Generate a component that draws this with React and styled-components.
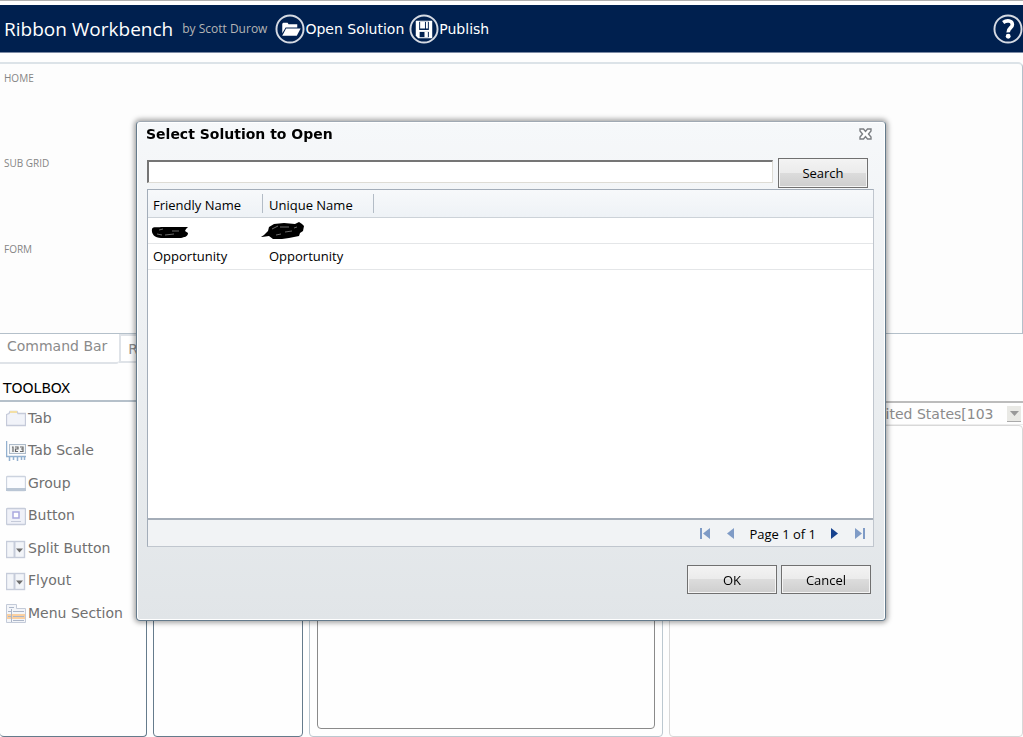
import React from "react";
import styled, { createGlobalStyle } from "styled-components";

const GlobalStyle = createGlobalStyle`
  * {
    box-sizing: border-box;
  }

  body {
    margin: 0;
    background: #fefefe;
    color: #000;
    font-family: "DejaVu Sans", Verdana, sans-serif;
    font-size: 14px;
  }

  button,
  input,
  select {
    font: inherit;
    color: inherit;
  }
`;

const segoe = `"Open Sans", "Segoe UI", sans-serif`;

const Page = styled.div`
  display: flex;
  flex-direction: column;
  min-height: 100vh;
  padding-top: 4px;
  border-top: 1px solid #b0b0b0;
`;

const Header = styled.header`
  display: flex;
  align-items: center;
  height: 48px;
  padding-left: 4px;
  background: #00204f;
  border-bottom: 1px solid #7d8ba5;
  color: #fff;

  h1 {
    margin: 0 9px 0 0;
    font: 400 19px ${segoe};
  }
`;

const Author = styled.span`
  margin-right: 8px;
  font: 12px ${segoe};
  color: #b5b5b5;
`;

const HeaderButton = styled.button`
  display: flex;
  align-items: center;
  padding: 0;
  margin-right: 5px;
  border: 0;
  background: none;
  cursor: pointer;

  &:last-child {
    margin: 0 0 0 auto;
  }
`;

const Preview = styled.section`
  display: grid;
  grid-template-rows: 85px 86px 1fr;
  height: 272px;
  margin-top: 9px;
  padding: 8px 4px;
  border: 1px solid #b4c0ca;
  border-top: 2px solid #dce3e8;
  border-left: 0;
  border-radius: 0 5px 0 0;
  background: #fdfdfd;
`;

const PreviewLabel = styled.h2`
  margin: 0;
  font: 400 10px/12px ${segoe};
  color: #858585;
`;

const Tabs = styled.div`
  display: flex;
  align-items: flex-start;
  height: 40px;
`;

const Tab = styled.button`
  height: ${p => (p.$active ? 30 : 29)}px;
  padding: ${p => (p.$active ? "0 12px 4px 7px" : "0 7px")};
  border: 2px solid #dfe3e8;
  border-width: ${p => (p.$active ? "0 0 2px" : "2px")};
  border-radius: 0 0 3px 0;
  background: #fff;
  color: #8b8b8b;
  cursor: pointer;
`;

const Workspace = styled.main`
  display: grid;
  grid-template-columns: 147px 150px 1fr 1fr;
  gap: 6px;
  flex: 1;
`;

const Column = styled.section`
  display: flex;
  flex-direction: column;
`;

const ColumnTitle = styled.h2`
  flex: none;
  height: 28px;
  margin: 0;
  padding: 5px 3px 0;
  border-bottom: 2px solid #b5c0ca;
  font-size: 14px;
  font-weight: 400;
  line-height: 18px;
`;

const Panel = styled.div`
  display: flex;
  flex: 1;
  margin-top: ${p => p.$top || 0}px;
  padding: ${p => (p.$padded ? 7 : 0)}px;
  border: 1px solid ${p => p.$color || "#657b8c"};
  border-width: ${p => p.$width || "1px"};
  border-radius: 4px;
`;

const Tools = styled.ul`
  width: 100%;
  margin: 0;
  padding: 0 0 0 6px;
  list-style: none;
`;

const Tool = styled.li`
  display: flex;
  align-items: center;
  gap: 2px;
  height: 32px;
  padding-bottom: 1px;
  margin-bottom: ${p => (p.$loose ? 1 : 0)}px;
  color: #707070;
  white-space: nowrap;

  svg {
    margin-top: 3px;
  }
`;

const LanguageBar = styled.div`
  display: flex;
  justify-content: flex-end;
  align-items: center;
  height: 24px;
  margin-top: 27px;
  border-top: 2px solid #bcbcbc;
  border-bottom: 1px solid #ececec;
  color: #8b8b8b;

  select {
    padding: 0 13px 0 4px;
    border: 0;
    background: none;
    appearance: none;
  }
`;

const DropArrow = styled.span`
  display: flex;
  align-items: center;
  justify-content: center;
  width: 14px;
  height: 16px;
  margin-right: 2px;
  border-bottom: 1px solid #aaa;
  background: #e9e9e5;
`;

const Overlay = styled.div`
  position: fixed;
  inset: 0;
  display: flex;
  align-items: center;
  justify-content: center;
  padding: 5px 1px 0 0;
`;

const Dialog = styled.div`
  display: flex;
  flex-direction: column;
  width: 750px;
  height: 500px;
  padding: 0 11px 26px 9px;
  border: 1px solid #657b8c;
  border-top-color: #a0a9b3;
  border-radius: 4px;
  background: linear-gradient(#f6f8fa, #e1e5e8);
  box-shadow: inset 0 0 0 1px #fff, 0 0 5px 2px rgba(0, 0, 0, 0.35);
  font: 13px ${segoe};
`;

const DialogTitle = styled.div`
  display: flex;
  align-items: center;
  justify-content: space-between;
  height: 24px;
  margin-bottom: 12px;

  h2 {
    margin: 0;
    font: 700 14px "DejaVu Sans", Verdana, sans-serif;
  }

  button {
    display: flex;
    padding: 0;
    margin-right: 2px;
    border: 0;
    background: none;
  }
`;

const SearchForm = styled.form`
  display: flex;
  align-items: flex-start;
  gap: 5px;
  padding: 0 6px 0 1px;

  input {
    flex: 1;
    min-width: 0;
    height: 23px;
    margin-top: 2px;
    border: 1px solid #dedcd5;
    border-top: 2px solid #757575;
    border-left: 2px solid #757575;
    background: #fff;
    outline: 0;
  }
`;

const PushButton = styled.button`
  width: 90px;
  height: ${p => p.$height || 29}px;
  padding: 0;
  border: 1px solid #707070;
  background: linear-gradient(#f3f3f3, #ebebeb 50%, #dcdcdc 50%, #cecece);
  box-shadow: inset 0 0 0 1px #f4f4f4;
`;

const Grid = styled.div`
  display: flex;
  flex-direction: column;
  flex: 1;
  margin: 1px 0 18px 1px;
  border: 1px solid #c0c6ce;
  border-top-color: #a3adb9;
  border-left-color: #a3adb9;
  background: #fff;
`;

const SolutionTable = styled.table`
  width: 100%;
  border-collapse: collapse;
  table-layout: fixed;

  th,
  td {
    height: 26px;
    padding: 0 0 0 5px;
    border-bottom: 1px solid #e4e6e8;
    text-align: left;
    font-weight: 400;
  }

  th + th,
  td + td {
    padding-left: 6px;
  }

  thead tr {
    background: linear-gradient(#f7f9fb, #eef2f6);
  }

  th {
    height: 27px;
    border-color: #ccd2d8;
  }

  th span {
    display: block;
    height: 19px;
    line-height: 22px;
    border-right: 1px solid #b3bcc6;
  }

  th:last-child span {
    border: 0;
  }

  svg {
    display: block;
    margin: 3px 0 0 -6px;
  }

  td + td svg {
    margin-left: -8px;
  }
`;

const Pager = styled.div`
  display: flex;
  align-items: center;
  justify-content: flex-end;
  gap: 13px;
  height: 28px;
  margin-top: auto;
  padding: 2px 7px 0 0;
  border-top: 2px solid #a4adb8;
  background: #f1f3f5;

  button {
    display: flex;
    padding: 0;
    border: 0;
    background: none;
  }
`;

const Actions = styled.div`
  display: flex;
  justify-content: flex-end;
  gap: 4px;
  padding-right: 3px;
`;

const Ring = ({ children }) => (
  <svg width="30" height="30" viewBox="0 0 31 31" aria-hidden="true">
    <circle cx="15.5" cy="15.5" r="14" fill="none" stroke="#d5dae3" strokeWidth="2" />
    {children}
  </svg>
);

const FolderIcon = () => (
  <Ring>
    <path d="M7.500 20V10l1-1H13l1 1.500h9V14H11z" fill="#fff" />
    <path d="M11.500 15H26.500l-4 7.500H7.500z" fill="#fff" />
  </Ring>
);

const SaveIcon = () => (
  <Ring>
    <path d="M7 7h17v18H9.500L7 22.500z" fill="#fff" />
    <path d="M10.500 8h10v8.500h-10z" fill="#00204f" />
    <path d="M11.500 8h5v7h-5zM17.500 8h2v7h-2z" fill="#fff" />
    <path d="M11 18.500h9.500V24H11z" fill="#00204f" />
    <path d="M16 18.500h3.500V24H16z" fill="#fff" />
  </Ring>
);

const HelpIcon = () => (
  <Ring>
    <path
      d="M10.500 8.800c4-2.800 9.500-2 9.500 2.200 0 3.500-4.500 3.500-4.300 8"
      fill="none"
      stroke="#fff"
      strokeWidth="3.800"
    />
    <circle cx="15.700" cy="23" r="2.500" fill="#fff" />
  </Ring>
);

const CloseIcon = () => (
  <svg width="13" height="12" viewBox="0 0 13 12" aria-hidden="true">
    <path
      d="M1 1h3.500l2 2.500 2-2.500H12v2L9.500 6l2.500 3v2H8.500l-2-2.500-2 2.500H1V9l2.500-3L1 3z"
      fill="#fff"
      stroke="#7c7f83"
      strokeWidth="1.400"
    />
  </svg>
);

const toolIcons = {
  tab: (
    <>
      <path d="M.5 5.500l2.500-1 1-2h7l1 2h7.500v12H.5z" fill="#f1f3f9" stroke="#c5cad9" strokeWidth="1.300" />
      <path d="M4 3h7" stroke="#f3dfa5" strokeWidth="2" />
    </>
  ),
  scale: (
    <>
      <path d="M.5 0v15.500H20M3.500 16v4M7.500 16v3M11.500 16v4M15.500 16v3M18.500 16v3" fill="none" stroke="#93b1d0" strokeWidth="1.500" />
      <rect x="3.500" y="3.500" width="16" height="9" fill="#f3f5f6" stroke="#aebccb" />
      <path d="M6 6h1v5M9 6h3v2H9.500v2.500H12M14 6h3v4.500h-3M15 8h2" fill="none" stroke="#666" strokeWidth="1.200" />
    </>
  ),
  group: (
    <>
      <rect x=".5" y="2.500" width="19" height="14" rx="1" fill="#fbfcff" stroke="#ccd3df" strokeWidth="1.300" />
      <path d="M0 15.500h20" stroke="#bac6d5" strokeWidth="3" />
    </>
  ),
  button: (
    <>
      <rect x=".5" y="2.500" width="19" height="16" rx="1" fill="#eff1f8" stroke="#c6ccda" strokeWidth="1.400" />
      <rect x="7" y="6" width="6" height="6" fill="#fff" stroke="#aaa9de" strokeWidth="1.500" />
      <path d="M5 15.500h10" stroke="#c5cad9" />
    </>
  ),
  split: (
    <>
      <rect x=".5" y="2.500" width="18" height="16" fill="#f3f5f9" stroke="#c6ccda" strokeWidth="1.400" />
      <path d="M8.500 3v15" stroke="#c6ccda" strokeWidth="2" />
      <path d="M10 9.500h7l-3.500 4z" fill="#6d6d6d" />
    </>
  ),
  menu: (
    <>
      <path d="M.5.500h10v4h9v14H.5z" fill="#f3f5f9" stroke="#c3cad8" />
      <path d="M1 10h18v5H1z" fill="#fbd0a0" />
      <path d="M3 3.500h5M7 7.500h11M2 7.500h3M7 12.500h11M2 12.500h3M7 16.500h11M5.500 5v13" stroke="#acb6c8" />
    </>
  )
};

const tools = [
  { icon: "tab", name: "Tab" },
  { icon: "scale", name: "Tab Scale" },
  { icon: "group", name: "Group" },
  { icon: "button", name: "Button" },
  { icon: "split", name: "Split Button" },
  { icon: "split", name: "Flyout" },
  { icon: "menu", name: "Menu Section" }
];

const ScribbleShort = () => (
  <svg width="42" height="16" viewBox="0 0 42 16" role="img" aria-label="Redacted">
    <path
      d="M5 5c1-3 6-1 9-2h27l-2 2-1 2 3 2c0 4-4 4-7 5H14c-6 0-10-4-9-9z"
      fill="#000"
    />
    <path d="M10 10l5 1M18 11l9-1M25 7h7M12 6l4-1" stroke="#999" strokeWidth=".7" />
  </svg>
);

const ScribbleLong = () => (
  <svg width="46" height="19" viewBox="0 0 46 19" role="img" aria-label="Redacted">
    <path
      d="M0 15l3-2 4-4 1-4 5-3 10-1 11 1 4-2 3 2 2 2-1 5-3 2-1 3-10 2-7 1H12l-4-3-7 1z"
      fill="#000"
    />
    <path d="M11 7l6-3M19 5h9M15 13l5-1M33 6l3-1M24 10l7-1" stroke="#999" strokeWidth=".7" />
  </svg>
);

const PageArrow = ({ d, dark }) => (
  <svg width="12" height="12" viewBox="0 0 12 12" aria-hidden="true">
    <path d={d} fill={dark ? "#17428e" : "#7f9bc6"} />
  </svg>
);

const SolutionDialog = () => (
  <Overlay>
    <Dialog role="dialog" aria-labelledby="dialog-title">
      <DialogTitle>
        <h2 id="dialog-title">Select Solution to Open</h2>
        <button aria-label="Close">
          <CloseIcon />
        </button>
      </DialogTitle>
      <SearchForm onSubmit={e => e.preventDefault()}>
        <input type="text" aria-label="Search solutions" />
        <PushButton $height={30}>Search</PushButton>
      </SearchForm>
      <Grid>
        <SolutionTable>
          <colgroup>
            <col width="115" />
            <col width="111" />
            <col />
          </colgroup>
          <thead>
            <tr>
              <th>
                <span>Friendly Name</span>
              </th>
              <th>
                <span>Unique Name</span>
              </th>
              <th>
                <span />
              </th>
            </tr>
          </thead>
          <tbody>
            <tr>
              <td>
                <ScribbleShort />
              </td>
              <td>
                <ScribbleLong />
              </td>
              <td />
            </tr>
            <tr>
              <td>Opportunity</td>
              <td>Opportunity</td>
              <td />
            </tr>
          </tbody>
        </SolutionTable>
        <Pager>
          <button aria-label="First page">
            <PageArrow d="M1 0h2v11H1zM11 0v11L4 5.500z" />
          </button>
          <button aria-label="Previous page">
            <PageArrow d="M10 0v11L3 5.500z" />
          </button>
          <span>Page 1 of 1</span>
          <button aria-label="Next page">
            <PageArrow dark d="M2 0v11l7-5.500z" />
          </button>
          <button aria-label="Last page">
            <PageArrow d="M1 0v11l7-5.500zM9 0h2v11H9z" />
          </button>
        </Pager>
      </Grid>
      <Actions>
        <PushButton>OK</PushButton>
        <PushButton>Cancel</PushButton>
      </Actions>
    </Dialog>
  </Overlay>
);

const App = () => (
  <>
    <GlobalStyle />
    <Page>
      <Header>
        <h1>Ribbon Workbench</h1>
        <Author>by Scott Durow</Author>
        <HeaderButton>
          <FolderIcon />
          Open Solution
        </HeaderButton>
        <HeaderButton>
          <SaveIcon />
          Publish
        </HeaderButton>
        <HeaderButton aria-label="Help">
          <HelpIcon />
        </HeaderButton>
      </Header>
      <Preview>
        <PreviewLabel>HOME</PreviewLabel>
        <PreviewLabel>SUB GRID</PreviewLabel>
        <PreviewLabel>FORM</PreviewLabel>
      </Preview>
      <Tabs>
        <Tab $active>Command Bar</Tab>
        <Tab>Ribbon</Tab>
      </Tabs>
      <Workspace>
        <Column>
          <ColumnTitle>TOOLBOX</ColumnTitle>
          <Panel $width="0 1px 1px 0">
            <Tools>
              {tools.map((tool, i) => (
                <Tool key={tool.name} $loose={i % 2 === 1}>
                  <svg width="20" height="20" viewBox="0 0 20 20" aria-hidden="true">
                    {toolIcons[tool.icon]}
                  </svg>
                  {tool.name}
                </Tool>
              ))}
            </Tools>
          </Panel>
        </Column>
        <Column>
          <Panel $top={51} />
        </Column>
        <Column>
          <Panel $top={51} $color="#bcc8d0" $padded>
            <Panel $color="#8a8a8a" />
          </Panel>
        </Column>
        <Column>
          <LanguageBar>
            <select aria-label="Language">
              <option>English - United States[103</option>
            </select>
            <DropArrow>
              <svg width="9" height="5" viewBox="0 0 9 5" aria-hidden="true">
                <path d="M0 0h9L4.500 5z" fill="#999" />
              </svg>
            </DropArrow>
          </LanguageBar>
          <Panel $color="#d8d8d8" />
        </Column>
      </Workspace>
    </Page>
    <SolutionDialog />
  </>
);

export default App;
